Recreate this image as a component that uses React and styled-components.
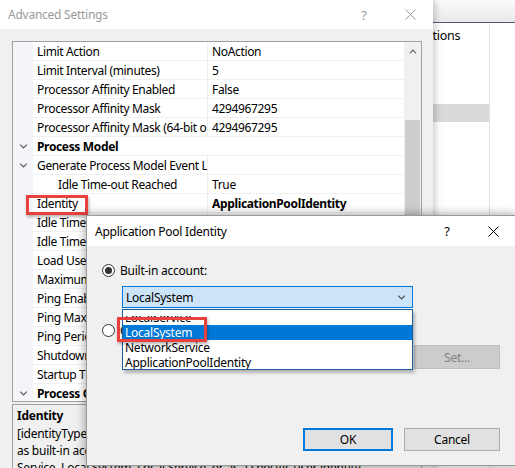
import React from 'react';
import styled, { createGlobalStyle } from 'styled-components';

const Global = createGlobalStyle`
  html, body { margin: 0; padding: 0; background: #fff; }
  body {
    font-family: "Segoe UI", "Noto Sans", sans-serif;
    font-size: 12px;
    letter-spacing: -0.25px;
    color: #000;
  }
  #root { width: 515px; height: 468px; }
`;

const Desktop = styled.div`
  position: relative;
  width: 515px;
  height: 468px;
  overflow: hidden;
  background: #fff;
`;

/* ---------- window behind ---------- */
const BackWindow = styled.div`
  position: absolute;
  left: 400px;
  top: 0;
  right: 0;
  bottom: 0;
  display: flex;
  flex-direction: column;
  background: #fff;
`;

const BackHeader = styled.div`
  height: 22px;
  background: linear-gradient(#fbfbfb, #e8e8e8);
  border-bottom: 1px solid #55557a;
`;

const BackBody = styled.div`
  flex: 1;
  display: flex;
`;

const ActionsPane = styled.div`
  width: 89px;
  border-right: 1px solid #e3e3e3;
  padding-top: 3px;
  display: flex;
  flex-direction: column;
`;

const ActionsTitle = styled.div`
  padding-left: 19px;
  font-size: 12.5px;
  height: 20px;
  line-height: 20px;
`;

const ActionsBand = styled.div`
  margin-top: ${p => p.$top}px;
  height: 18px;
  background: #d9d9d9;
`;

/* ---------- shared window frame ---------- */
const Window = styled.div`
  position: absolute;
  left: ${p => p.$x}px;
  top: ${p => p.$y}px;
  width: ${p => p.$w}px;
  height: ${p => p.$h}px;
  background: #f0f0f0;
  display: flex;
  flex-direction: column;
  box-shadow: ${p => p.$shadow};
  border: ${p => (p.$border ? '1px solid #9a9a9a' : 'none')};
  box-sizing: border-box;
`;

const TitleBar = styled.div`
  height: ${p => p.$h}px;
  flex-shrink: 0;
  background: #fff;
  display: flex;
  align-items: center;
`;

const Title = styled.div`
  flex: 1;
  padding-left: 8px;
  font-size: 12px;
  color: ${p => (p.$active ? '#000' : '#9a9a9a')};
`;

const CaptionButton = styled.div`
  width: 46px;
  height: 100%;
  display: flex;
  align-items: center;
  justify-content: center;
  color: ${p => (p.$active ? '#000' : '#9a9a9a')};
  font-size: 13px;
`;

/* ---------- advanced settings ---------- */
const SettingsBody = styled.div`
  flex: 1;
  padding: 12px 11px 0 12px;
  display: flex;
  flex-direction: column;
`;

const Grid = styled.div`
  height: 361px;
  flex-shrink: 0;
  border: 1px solid #a0a0a0;
  box-sizing: border-box;
  display: flex;
  overflow: hidden;
  background: #fff;
`;

const Rows = styled.div`
  flex: 1;
  display: flex;
  flex-direction: column;
  letter-spacing: -0.35px;
`;

const Row = styled.div`
  height: 19px;
  flex-shrink: 0;
  display: grid;
  grid-template-columns: 20px 174px 1fr;
  background: #fff;
`;

const Gutter = styled.div`
  background: #f3f5f8;
  display: flex;
  align-items: center;
  justify-content: center;
`;

const NameCell = styled.div`
  padding-left: ${p => 4 + (p.$indent || 0)}px;
  line-height: 20px;
  height: 18px;
  border-bottom: 1px solid #f0f0f0;
  font-weight: ${p => (p.$bold ? 700 : 400)};
  white-space: nowrap;
  overflow: hidden;
  grid-column: ${p => (p.$span ? '2 / 4' : 'auto')};
`;

const ValueCell = styled.div`
  padding-left: 4px;
  line-height: 20px;
  height: 18px;
  border-left: 1px solid #f0f0f0;
  border-bottom: 1px solid #f0f0f0;
  font-weight: ${p => (p.$bold ? 700 : 400)};
  white-space: nowrap;
  overflow: hidden;
`;

const ScrollBar = styled.div`
  width: 17px;
  background: #f0f0f0;
  display: flex;
  flex-direction: column;
  align-items: center;
`;

const ScrollArrow = styled.div`
  height: 19px;
  display: flex;
  align-items: center;
  justify-content: center;
`;

const ScrollThumb = styled.div`
  margin-top: 59px;
  width: 15px;
  flex: 1;
  background: #cdcdcd;
`;

const Description = styled.div`
  margin-top: 2px;
  flex: 1;
  border: 1px solid #a0a0a0;
  border-bottom: none;
  padding: 2px 4px;
  background: #f0f0f0;
`;

const DescTitle = styled.div`
  font-weight: 700;
  line-height: 18px;
`;

const DescLine = styled.div`
  line-height: 17px;
  white-space: nowrap;
`;

/* ---------- identity dialog ---------- */
const DialogBody = styled.div`
  position: relative;
  flex: 1;
  padding: 13px 15px 14px 15px;
  display: flex;
  flex-direction: column;
`;

const RadioRow = styled.label`
  display: flex;
  align-items: center;
  gap: 5px;
  height: 22px;
  margin-top: ${p => p.$mt || 0}px;
`;

const Radio = styled.span`
  width: 13px;
  height: 13px;
  box-sizing: border-box;
  border-radius: 50%;
  border: 1px solid #333;
  background: #fff;
  display: flex;
  align-items: center;
  justify-content: center;
  &::after {
    content: '';
    width: 7px;
    height: 7px;
    border-radius: 50%;
    background: ${p => (p.$checked ? '#333' : 'transparent')};
  }
`;

const Combo = styled.div`
  margin: 5px 0 0 20px;
  width: 291px;
  height: 22px;
  box-sizing: border-box;
  background: #cce4f7;
  border: 1px solid #0078d7;
  display: flex;
  align-items: center;
  justify-content: space-between;
  padding: 0 6px 0 3px;
`;

const SetRow = styled.div`
  margin-top: 4px;
  display: flex;
  gap: 8px;
  padding-left: 20px;
  padding-right: 1px;
`;

const TextBox = styled.div`
  flex: 1;
  height: 24px;
  background: #f0f0f0;
  border: 1px solid #ccc;
  box-sizing: border-box;
`;

const Button = styled.div`
  width: ${p => p.$w}px;
  height: ${p => p.$h || 23}px;
  box-sizing: border-box;
  display: flex;
  align-items: center;
  justify-content: center;
  background: ${p => (p.$disabled ? '#cccccc' : '#e1e1e1')};
  color: ${p => (p.$disabled ? '#838383' : '#000')};
  border: ${p =>
    p.$default ? '2px solid #0078d7' : p.$disabled ? '1px solid #bfbfbf' : '1px solid #adadad'};
`;

const Footer = styled.div`
  margin-top: auto;
  display: flex;
  justify-content: flex-end;
  gap: 11px;
  padding-right: 1px;
`;

const DropList = styled.div`
  position: absolute;
  left: 35px;
  top: 63px;
  width: 291px;
  height: 61px;
  box-sizing: border-box;
  background: #fff;
  border: 1px solid #1e5e9e;
  box-shadow: 2px 3px 3px rgba(0, 0, 0, 0.25);
  overflow: hidden;
`;

const ListItem = styled.div`
  height: 15px;
  line-height: 15px;
  padding-left: 2px;
  white-space: nowrap;
  background: ${p => (p.$selected ? '#0078d7' : 'transparent')};
  color: ${p => (p.$selected ? '#fff' : '#000')};
  clip-path: ${p => (p.$clip ? 'inset(6px 0 0 0)' : 'none')};
`;

/* red annotation boxes over the screenshot */
const Highlight = styled.div`
  position: absolute;
  left: ${p => p.$x}px;
  top: ${p => p.$y}px;
  width: ${p => p.$w}px;
  height: ${p => p.$h}px;
  box-sizing: border-box;
  border: 3px solid #e8403d;
  box-shadow: 1px 2px 3px rgba(0, 0, 0, 0.3);
  pointer-events: none;
`;

const Chevron = ({ up, size = 9, color = '#555' }) => (
  <svg width={size} height={Math.round(size * 0.6)} viewBox="0 0 10 6">
    <path
      d={up ? 'M1 5.2 L5 1.2 L9 5.2' : 'M1 0.8 L5 4.8 L9 0.8'}
      fill="none"
      stroke={color}
      strokeWidth="1.3"
    />
  </svg>
);

const CloseIcon = ({ color }) => (
  <svg width="11" height="11" viewBox="0 0 11 11">
    <path d="M0.5 0.5 L10.5 10.5 M10.5 0.5 L0.5 10.5" stroke={color} strokeWidth="1" />
  </svg>
);

const props = [
  { name: 'Limit Action', value: 'NoAction' },
  { name: 'Limit Interval (minutes)', value: '5' },
  { name: 'Processor Affinity Enabled', value: 'False' },
  { name: 'Processor Affinity Mask', value: '4294967295' },
  { name: 'Processor Affinity Mask (64-bit option)', value: '4294967295' },
  { name: 'Process Model', category: true },
  { name: 'Generate Process Model Event Log Entry', group: true },
  { name: 'Idle Time-out Reached', value: 'True', indent: 21 },
  { name: 'Identity', value: 'ApplicationPoolIdentity', boldValue: true },
  { name: 'Idle Time-out (minutes)', value: '20' },
  { name: 'Idle Time-out Action', value: 'Terminate' },
  { name: 'Load User Profile', value: 'True' },
  { name: 'Maximum Worker Processes', value: '1' },
  { name: 'Ping Enabled', value: 'True' },
  { name: 'Ping Maximum Response Time (seconds)', value: '90' },
  { name: 'Ping Period (seconds)', value: '30' },
  { name: 'Shutdown Time Limit (seconds)', value: '90' },
  { name: 'Startup Time Limit (seconds)', value: '90' },
  { name: 'Process Orphaning', category: true },
];

export default function App() {
  return (
    <>
      <Global />
      <Desktop>
        <BackWindow>
          <BackHeader />
          <BackBody>
            <ActionsPane>
              <ActionsTitle>Actions</ActionsTitle>
              <ActionsBand $top={58} />
            </ActionsPane>
          </BackBody>
        </BackWindow>

        <Window $x={0} $y={0} $w={433} $h={480} $shadow="2px 0 7px rgba(0,0,0,0.22)">
          <TitleBar $h={29}>
            <Title>Advanced Settings</Title>
            <CaptionButton>?</CaptionButton>
            <CaptionButton>
              <CloseIcon color="#9a9a9a" />
            </CaptionButton>
          </TitleBar>
          <SettingsBody>
            <Grid>
              <Rows>
                {props.map(p => (
                  <Row key={p.name}>
                    <Gutter>{(p.category || p.group) && <Chevron />}</Gutter>
                    {p.category ? (
                      <NameCell $bold $span>
                        {p.name}
                      </NameCell>
                    ) : (
                      <>
                        <NameCell $indent={p.indent}>{p.name}</NameCell>
                        <ValueCell $bold={p.boldValue}>{p.value}</ValueCell>
                      </>
                    )}
                  </Row>
                ))}
              </Rows>
              <ScrollBar>
                <ScrollArrow>
                  <Chevron up size={8} color="#606060" />
                </ScrollArrow>
                <ScrollThumb />
              </ScrollBar>
            </Grid>
            <Description>
              <DescTitle>Identity</DescTitle>
              <DescLine>[identityType] Configures the application pool to run</DescLine>
              <DescLine>as built-in account, i.e. Application Pool Identity (recommended), Network</DescLine>
              <DescLine>Service, Local System, Local Service, or as a specific user identity.</DescLine>
            </Description>
          </SettingsBody>
        </Window>

        <Highlight $x={26} $y={195} $w={62} $h={20} />

        <Window
          $x={86}
          $y={215}
          $w={431}
          $h={251}
          $border
          $shadow="0 0 10px rgba(0,0,0,0.4)"
        >
          <TitleBar $h={30}>
            <Title $active>Application Pool Identity</Title>
            <CaptionButton $active>?</CaptionButton>
            <CaptionButton $active>
              <CloseIcon color="#000" />
            </CaptionButton>
          </TitleBar>
          <DialogBody>
            <RadioRow>
              <Radio $checked />
              Built-in account:
            </RadioRow>
            <Combo>
              LocalSystem
              <Chevron size={9} color="#444" />
            </Combo>
            <RadioRow $mt={11}>
              <Radio />
              Custom account:
            </RadioRow>
            <SetRow>
              <TextBox />
              <Button $w={86} $h={24} $disabled>
                Set...
              </Button>
            </SetRow>
            <Footer>
              <Button $w={90} $default>
                OK
              </Button>
              <Button $w={96}>Cancel</Button>
            </Footer>
            <DropList>
              <ListItem $clip>LocalService</ListItem>
              <ListItem $selected>LocalSystem</ListItem>
              <ListItem>NetworkService</ListItem>
              <ListItem>ApplicationPoolIdentity</ListItem>
            </DropList>
          </DialogBody>
        </Window>

        <Highlight $x={117} $y={317} $w={90} $h={25} />
      </Desktop>
    </>
  );
}
